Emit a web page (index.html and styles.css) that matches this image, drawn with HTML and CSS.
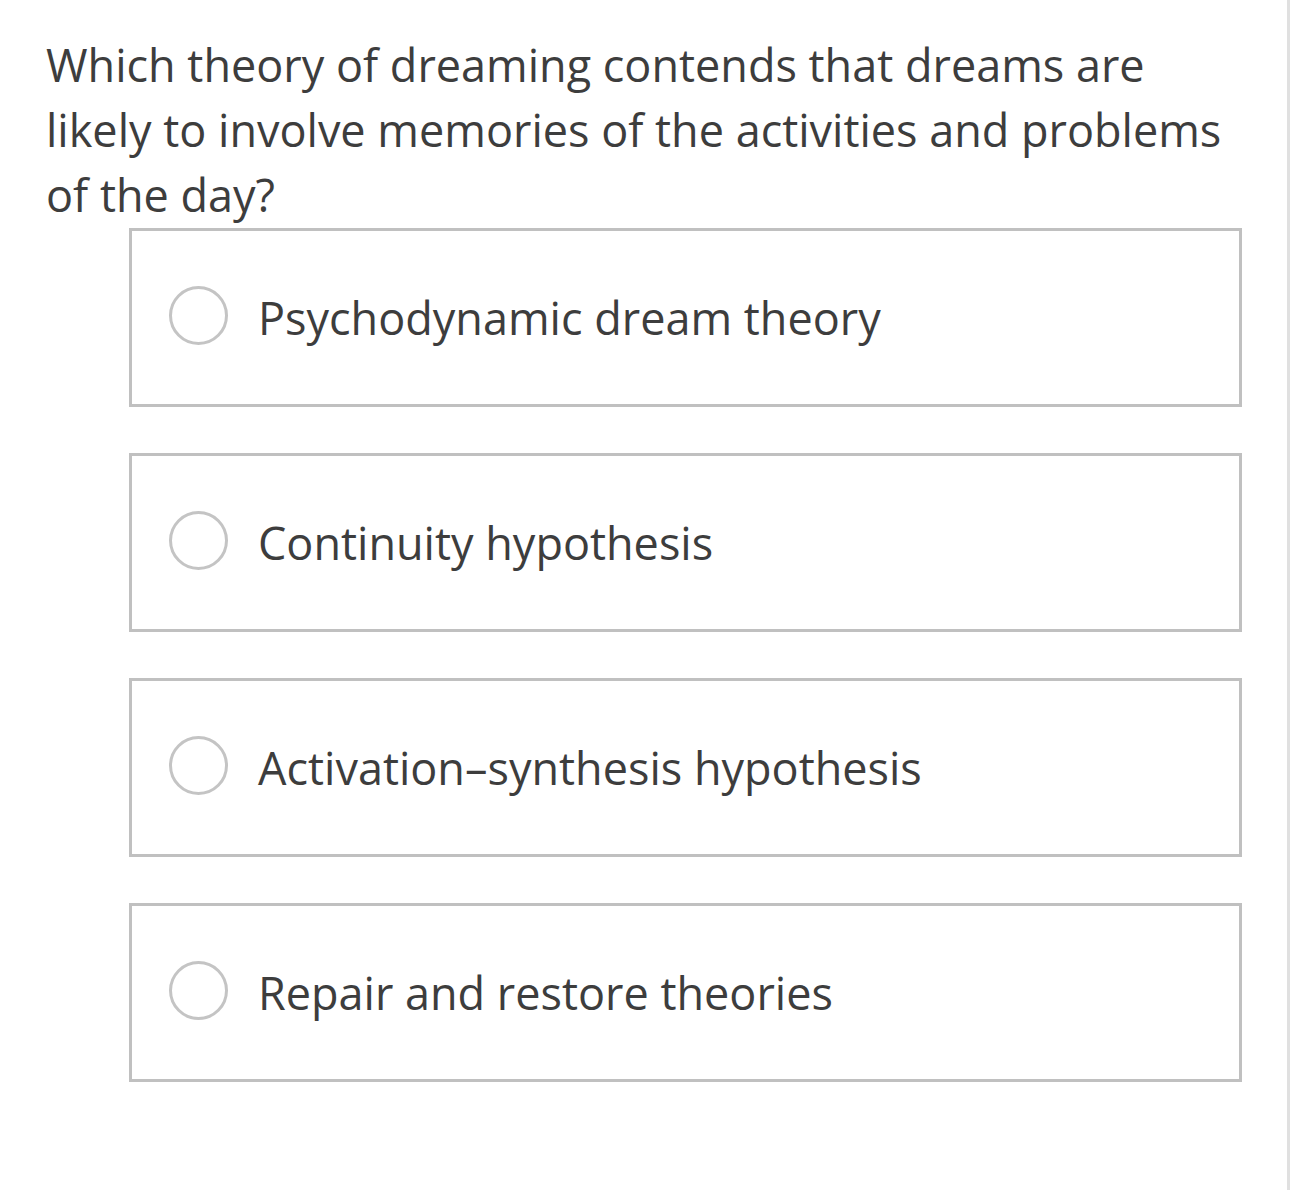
FILE: index.html
```html
<!DOCTYPE html>
<html>
<head>
<meta charset="utf-8">
<link rel="stylesheet" href="styles.css">
</head>
<body>
<div class="page">
  <div class="question">Which theory of dreaming contends that dreams are likely to involve memories of the activities and problems of the day?</div>
  <div class="options">
    <label class="option"><span class="radio"></span><span class="label">Psychodynamic dream theory</span></label>
    <label class="option"><span class="radio"></span><span class="label">Continuity hypothesis</span></label>
    <label class="option"><span class="radio"></span><span class="label">Activation–synthesis hypothesis</span></label>
    <label class="option"><span class="radio"></span><span class="label">Repair and restore theories</span></label>
  </div>
</div>
</body>
</html>
```
FILE: styles.css
```css
html, body {
  margin: 0;
  padding: 0;
  background: #ffffff;
}
.page {
  width: 1290px;
  min-height: 1190px;
  box-sizing: border-box;
  border-right: 3px solid #e0e0e0;
  font-family: "Open Sans", "Liberation Sans", sans-serif;
  color: #3d3d3d;
  padding-top: 32px;
}
.question {
  padding-left: 46px;
  padding-right: 30px;
  font-size: 45px;
  line-height: 65px;
}
.options {
  display: flex;
  flex-direction: column;
  gap: 46px;
  margin-top: 1px;
  margin-left: 129px;
  width: 1113px;
}
.option {
  display: flex;
  align-items: center;
  height: 179px;
  box-sizing: border-box;
  border: 3px solid #c0c0c0;
  padding-left: 37px;
}
.radio {
  width: 59px;
  height: 59px;
  box-sizing: border-box;
  border: 3px solid #c4c4c4;
  border-radius: 50%;
  flex: none;
  margin-top: -5px;
}
.label {
  margin-left: 30px;
  font-size: 45px;
  line-height: 60px;
}
```
